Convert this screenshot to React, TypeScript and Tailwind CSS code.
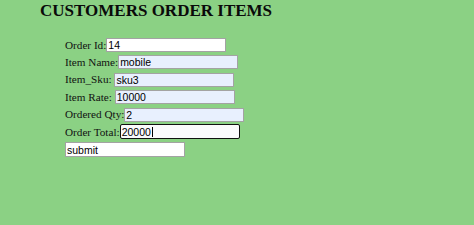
import React from "react"

const rows = [
  { label: "Order Id:", value: "14", bg: "bg-white" },
  { label: "Item Name:", value: "mobile", bg: "bg-[#e8f0fe]" },
  { label: "Item_Sku:\u00a0", value: "sku3", bg: "bg-[#e8f0fe]" },
  { label: "Item Rate:\u00a0", value: "10000", bg: "bg-[#e8f0fe]" },
  { label: "Ordered Qty:", value: "2", bg: "bg-[#e8f0fe]" },
]

const inputCls =
  "h-[14px] w-[120px] border border-[#a3a3a3] px-[1px] text-[10.5px] leading-none text-black outline-none font-['Liberation_Sans',Arial,sans-serif]"

export default function App() {
  return (
    <div className="h-[225px] w-full bg-[#8bd184] font-['Liberation_Serif','Times_New_Roman',serif] text-[#111]">
      <h2 className="pl-[40px] pt-[1px] text-[17px] font-bold leading-[19px] text-[#0a0a0a]">
        CUSTOMERS ORDER ITEMS
      </h2>

      <form className="ml-[65px] mt-[18px] flex flex-col gap-[3.4px] text-[11.2px]" onSubmit={(e) => e.preventDefault()}>
        {rows.map((r) => (
          <div key={r.label} className="flex h-[14px] items-center">
            <span className="whitespace-pre">{r.label}</span>
            <input readOnly value={r.value} className={`${inputCls} ${r.bg}`} />
          </div>
        ))}
        <div className="flex h-[14px] items-center">
          <span>Order Total:</span>
          <div className="flex h-[15px] w-[120px] items-center rounded-[2px] border-[1.5px] border-[#111] bg-[#fbfbfd] px-[1px] text-[10.5px] leading-none text-black font-['Liberation_Sans',Arial,sans-serif]">
            20000<span className="ml-[1px] inline-block h-[10px] w-[1px] bg-black" />
          </div>
        </div>
        <div className="flex h-[15px] items-center">
          <input readOnly value="submit" className={`${inputCls} h-[15px] bg-white`} />
        </div>
      </form>
    </div>
  )
}
